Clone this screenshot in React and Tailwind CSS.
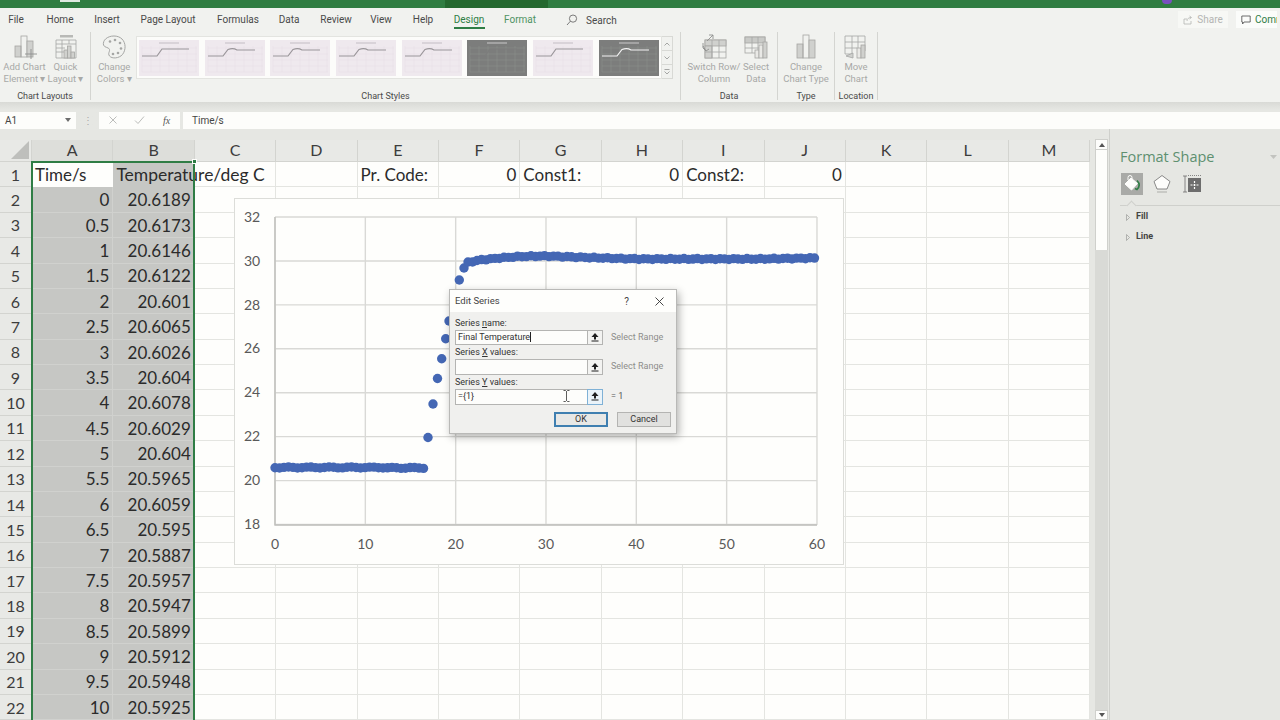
import React from 'react';

const tabs = [
  { label: 'File', cls: 'w-[32px]' },
  { label: 'Home', cls: 'w-[56px]' },
  { label: 'Insert', cls: 'w-[38px]' },
  { label: 'Page Layout', cls: 'w-[84px]' },
  { label: 'Formulas', cls: 'w-[56px]' },
  { label: 'Data', cls: 'w-[46px]' },
  { label: 'Review', cls: 'w-[48px]' },
  { label: 'View', cls: 'w-[42px]' },
  { label: 'Help', cls: 'w-[42px]' },
];

const columns = ['A', 'B', 'C', 'D', 'E', 'F', 'G', 'H', 'I', 'J', 'K', 'L', 'M'];

const rows = [
  ['0', '20.6189'], ['0.5', '20.6173'], ['1', '20.6146'], ['1.5', '20.6122'], ['2', '20.601'],
  ['2.5', '20.6065'], ['3', '20.6026'], ['3.5', '20.604'], ['4', '20.6078'], ['4.5', '20.6029'],
  ['5', '20.604'], ['5.5', '20.5965'], ['6', '20.6059'], ['6.5', '20.595'], ['7', '20.5887'],
  ['7.5', '20.5957'], ['8', '20.5947'], ['8.5', '20.5899'], ['9', '20.5912'], ['9.5', '20.5948'],
  ['10', '20.5925'],
];

// marker positions on the chart, in chart pixels
const riseDots = [
  [194, 239.5], [199, 206], [203.5, 180.5], [207.7, 160.7], [211.7, 140.7], [215, 123],
  [225.3, 82], [230, 70],
];
const plateau = [[236, 64], [246, 62], [266, 60], [286, 58.5], [312, 58], [366, 60], [406, 61], [466, 61], [526, 61], [583, 60]];

function plateauY(x) {
  for (let i = 0; i < plateau.length - 1; i++) {
    const [x0, y0] = plateau[i];
    const [x1, y1] = plateau[i + 1];
    if (x <= x1) return y0 + ((x - x0) / (x1 - x0)) * (y1 - y0);
  }
  return 60;
}

const dots = [];
for (let x = 41; x <= 192; x += 4.5) dots.push([x, 269.5 + Math.sin(x * 1.7) * 0.5 + (x > 150 ? 0.4 : 0)]);
riseDots.forEach((d) => dots.push(d));
for (let x = 234; x <= 584; x += 4.5) dots.push([x, plateauY(x) + Math.sin(x * 2.3) * 0.5]);

function Thumb({ dark, bright, bump }) {
  const bg = dark ? '#7c7d7c' : '#efe9ee';
  const grid = dark ? '#8f908f' : '#e6dee4';
  const line = bright ? '#f4f4f4' : dark ? '#7c7d7c' : '#9a969a';
  const curve = bump ? 'M3 16H18L23 9.5Q28 7.5 32 10H50' : 'M3 16H18L23 9H50';
  return (
    <svg width="60" height="36" viewBox="0 0 60 36" className="shrink-0">
      <rect width="60" height="36" fill={bg} />
      {[8, 14, 20, 26, 32].map((y) => <path key={y} d={`M3 ${y}H58`} stroke={grid} strokeWidth="0.5" />)}
      {[3, 12, 21, 30, 39, 48, 57].map((x) => <path key={x} d={`M${x} 6V32`} stroke={grid} strokeWidth="0.5" />)}
      <rect x="20" y="2.5" width="20" height="1" fill={dark ? '#c9c9c9' : '#c4bec3'} />
      <path d={curve} stroke={line} strokeWidth="1.2" fill="none" />
    </svg>
  );
}

function RibbonButton({ icon, lines, width }) {
  return (
    <div className={`${width} flex flex-col items-center shrink-0`}>
      <div className="h-[29px] flex items-center justify-center">{icon}</div>
      {lines.map((line) => (
        <div key={line} className="h-[12px] leading-[12px] text-[9.5px] text-[#a8a9a7] whitespace-nowrap">{line}</div>
      ))}
    </div>
  );
}

function Group({ label, width, children }) {
  return (
    <div className={`${width} h-[68px] flex flex-col border-r border-[#d4d5d1] shrink-0`}>
      <div className="flex-1 flex">{children}</div>
      <div className="text-center text-[9px] leading-[12px] text-[#4a4a4a] mb-[-2px]">{label}</div>
    </div>
  );
}

const s = { stroke: '#a5a6a4', strokeWidth: 0.8, fill: 'none' };
const f = { stroke: '#a5a6a4', strokeWidth: 0.8, fill: '#d0d1ce' };

const AddChartIcon = (
  <svg width="26" height="26" viewBox="0 0 26 26">
    <rect x="3" y="12" width="6" height="11" {...f} />
    <rect x="9" y="2" width="6" height="21" {...s} />
    <rect x="15" y="7" width="6" height="16" {...f} />
    <path d="M13 20H25M19 15V25" stroke="#8f908e" strokeWidth="0.9" />
  </svg>
);
const QuickLayoutIcon = (
  <svg width="24" height="26" viewBox="0 0 24 26">
    <rect x="6" y="1" width="13" height="2.5" fill="#b8b9b6" />
    <path d="M2 6H22V24H2ZM2 10H22M2 14H11M2 18H11M8 6V24M15 6V10" {...s} />
    <rect x="10" y="16" width="3.5" height="8" {...f} />
    <rect x="13.5" y="12" width="3.5" height="12" {...f} />
    <rect x="17" y="18" width="3.5" height="6" {...f} />
  </svg>
);
const PaletteIcon = (
  <svg width="26" height="26" viewBox="0 0 26 26">
    <path d="M13 2C6 2 1.5 6.5 2.5 11C3.5 14 8 13 8.5 15.5C9 18 6.5 19 8.5 22C11 25 18 24.5 21.5 20.5C25 16 25 9 21 5C19 3 16 2 13 2Z" {...s} strokeWidth="1" />
    <circle cx="9" cy="7.5" r="1.3" fill="#a5a6a4" />
    <circle cx="14" cy="6" r="1.3" fill="#a5a6a4" />
    <circle cx="19" cy="9" r="1.3" fill="#a5a6a4" />
    <circle cx="20" cy="14.5" r="1.3" fill="#a5a6a4" />
    <circle cx="17" cy="19" r="1.3" fill="#a5a6a4" />
    <circle cx="12" cy="20" r="1.3" fill="#a5a6a4" />
  </svg>
);
const SwitchIcon = (
  <svg width="26" height="26" viewBox="0 0 26 26">
    <rect x="4" y="6" width="21" height="18" {...s} />
    <rect x="4" y="6" width="21" height="6" fill="#d0d1ce" stroke="#a5a6a4" strokeWidth="0.8" />
    <rect x="4" y="12" width="7" height="12" fill="#d0d1ce" stroke="#a5a6a4" strokeWidth="0.8" />
    <path d="M11 6V24M18 6V24M4 18H25" {...s} />
    <path d="M2 9V14L5 17M2 12L5 17L8 15M6 7L12 1M8 1H12V5" stroke="#8f908e" strokeWidth="0.9" fill="none" />
  </svg>
);
const SelectDataIcon = (
  <svg width="26" height="26" viewBox="0 0 26 26">
    <rect x="2" y="3" width="20" height="16" {...s} />
    <rect x="2" y="3" width="20" height="6" fill="#c9cac7" stroke="#a5a6a4" strokeWidth="0.8" />
    <path d="M2 14H22M9 3V19M15 3V19" {...s} />
    <rect x="12" y="16" width="4" height="8" fill="#e9e9e6" stroke="#a5a6a4" strokeWidth="0.8" />
    <rect x="16" y="11" width="4" height="13" fill="#e9e9e6" stroke="#a5a6a4" strokeWidth="0.8" />
    <rect x="20" y="8" width="4" height="16" fill="#d0d1ce" stroke="#a5a6a4" strokeWidth="0.8" />
  </svg>
);
const ChartTypeIcon = (
  <svg width="24" height="26" viewBox="0 0 24 26">
    <rect x="3" y="10" width="6" height="14" {...f} />
    <rect x="9" y="1" width="6" height="23" {...s} />
    <rect x="15" y="6" width="6" height="18" {...f} />
  </svg>
);
const MoveChartIcon = (
  <svg width="26" height="26" viewBox="0 0 26 26">
    <path d="M2 2H22V17M2 2V20H10M2 8H22M2 14H14M9 2V20M15 2V14" {...s} />
    <path d="M3 22L10 19V24Z" {...f} />
    <rect x="14" y="14" width="4" height="10" fill="#e9e9e6" stroke="#a5a6a4" strokeWidth="0.8" />
    <rect x="18" y="11" width="4" height="13" {...f} />
  </svg>
);

function UpButton({ active }) {
  return (
    <div className={`w-[16px] h-full shrink-0 flex items-center justify-center border ${active ? 'border-[#7fb1d6] bg-[#eaf3f9]' : 'border-[#b4b4b2] bg-[#f3f3f1]'}`}>
      <svg width="8" height="9" viewBox="0 0 8 9">
        <path d="M4 0L7.5 4H5V6.5H3V4H0.5Z" fill="#1f1f1f" />
        <path d="M0.5 8H7.5" stroke="#1f1f1f" strokeWidth="1" />
      </svg>
    </div>
  );
}

function SeriesField({ label, value, hint, caret, dim = true }) {
  return (
    <div>
      <div className="h-[14px] leading-[14px] text-[#333] whitespace-nowrap">{label}</div>
      <div className="flex items-center h-[15.75px]">
        <div className="w-[132px] h-full bg-[#fdfdfb] border border-[#b4b4b2] border-r-0 px-[2px] leading-[13px] text-[#333] flex items-center">
          {value}
          {caret && <span className="inline-block w-px h-[10px] bg-[#222]" />}
        </div>
        <UpButton active={!dim} />
        <div className={`ml-[8px] whitespace-nowrap ${dim ? 'text-[#8d8d8b]' : 'text-[#555]'}`}>{hint}</div>
      </div>
    </div>
  );
}

export default function App() {
  return (
    <div className="w-[1280px] h-[720px] overflow-hidden flex flex-col bg-[#e6e7e3] font-['Roboto',sans-serif]">
      {/* title bar, only the bottom edge is on screen */}
      <div className="h-[8px] bg-[#307d42] flex shrink-0">
        <div className="ml-[60px] w-[20px] h-[2px] bg-[#dfe9e1]" />
        <div className="ml-[365px] w-[103px] bg-[#24682f]" />
        <div className="ml-[614px] w-[10px] h-[4px] rounded-b-full bg-[#7a4fc0]" />
      </div>

      {/* tabs */}
      <div className="h-[24px] bg-[#f1f2ef] flex items-start shrink-0 text-[10px] text-[#4a4a4a]">
        {tabs.map((t) => (
          <div key={t.label} className={`${t.cls} text-center leading-[24px]`}>{t.label}</div>
        ))}
        <div className="w-[50px] text-center leading-[24px] text-[#2f7d45] relative">
          Design
          <div className="absolute left-[10px] right-[9px] top-[19px] h-[2px] bg-[#2f7d45]" />
        </div>
        <div className="w-[52px] text-center leading-[24px] text-[#4f9363]">Format</div>
        <div className="ml-[20px] h-[24px] flex items-center gap-[8px]">
          <svg width="12" height="12" viewBox="0 0 12 12">
            <circle cx="7" cy="4.6" r="3.6" fill="none" stroke="#6d6d6d" strokeWidth="0.9" />
            <path d="M4.4 7.2L1 11" stroke="#6d6d6d" strokeWidth="0.9" />
          </svg>
          <span className="w-[30px]">Search</span>
        </div>
        <div className="ml-[562px] mt-[3px] w-[50px] h-[17px] bg-[#f7f8f5] flex items-center justify-center gap-[4px] text-[#b4b5b3] shrink-0">
          <svg width="10" height="10" viewBox="0 0 10 10">
            <path d="M1 4H4M1 4V9H8V6M4 6C4 3.5 6 2.5 8 2.5M6.5 1L8.5 2.5L6.5 4" fill="none" stroke="#b4b5b3" strokeWidth="0.8" />
          </svg>
          Share
        </div>
        <div className="ml-[8px] mt-[3px] w-[41px] h-[17px] bg-[#fbfcfa] flex items-center pl-[5px] gap-[4px] text-[#2f7d45] overflow-hidden shrink-0 whitespace-nowrap">
          <svg width="10" height="10" viewBox="0 0 10 10" className="shrink-0">
            <path d="M0.8 1H9.2V7H3L1.6 9V7H0.8Z" fill="none" stroke="#4a4a4a" strokeWidth="0.8" />
          </svg>
          Comments
        </div>
      </div>

      {/* ribbon */}
      <div className="h-[70px] bg-[#f1f2ef] flex shrink-0">
        <Group label="Chart Layouts" width="w-[91px]">
          <div className="flex pl-[4px]">
            <RibbonButton icon={AddChartIcon} lines={['Add Chart', 'Element ▾']} width="w-[41px]" />
            <RibbonButton icon={QuickLayoutIcon} lines={['Quick', 'Layout ▾']} width="w-[41px]" />
          </div>
        </Group>
        <Group label="Chart Styles" width="w-[590px]">
          <div className="flex">
            <div className="ml-[2px]">
              <RibbonButton icon={PaletteIcon} lines={['Change', 'Colors ▾']} width="w-[42.5px]" />
            </div>
            <div className="h-[43px] mt-[4px] bg-[#fcfcfa] border border-[#e3e4e0] w-[526px] flex items-center gap-[5.7px] pl-[2.5px] overflow-hidden shrink-0">
              <Thumb /><Thumb bump /><Thumb bump /><Thumb bump /><Thumb bump /><Thumb dark /><Thumb /><Thumb dark bright bump />
            </div>
            <div className="w-[11px] h-[43px] mt-[4px] flex flex-col border border-l-0 border-[#d8d9d5] text-[#a5a6a4]">
              <div className="h-[14px] flex items-center justify-center border-b border-[#d8d9d5]">
                <svg width="6" height="4" viewBox="0 0 6 4"><path d="M0.5 3.5L3 1L5.5 3.5" fill="none" stroke="#a5a6a4" /></svg>
              </div>
              <div className="h-[14px] flex items-center justify-center border-b border-[#d8d9d5]">
                <svg width="6" height="4" viewBox="0 0 6 4"><path d="M0.5 0.5L3 3L5.5 0.5" fill="none" stroke="#a5a6a4" /></svg>
              </div>
              <div className="flex-1 flex items-center justify-center">
                <svg width="6" height="6" viewBox="0 0 6 6"><path d="M0.5 0.5H5.5M0.5 2.5L3 5L5.5 2.5" fill="none" stroke="#a5a6a4" /></svg>
              </div>
            </div>
          </div>
        </Group>
        <Group label="Data" width="w-[97px]">
          <div className="flex pl-[8px]">
            <RibbonButton icon={SwitchIcon} lines={['Switch Row/', 'Column']} width="w-[50px]" />
            <RibbonButton icon={SelectDataIcon} lines={['Select', 'Data']} width="w-[34px]" />
          </div>
        </Group>
        <Group label="Type" width="w-[57px]">
          <RibbonButton icon={ChartTypeIcon} lines={['Change', 'Chart Type']} width="w-full" />
        </Group>
        <Group label="Location" width="w-[43px]">
          <RibbonButton icon={MoveChartIcon} lines={['Move', 'Chart']} width="w-full" />
        </Group>
      </div>

      {/* formula bar */}
      <div className="h-[27px] shrink-0 bg-gradient-to-b from-[#d9dad6] to-[#e6e7e3] to-[30%] flex items-end text-[10px] text-[#444]">
        <div className="w-[76px] h-[17.5px] bg-[#fdfdfb] flex items-center justify-between px-[5px]">
          <span>A1</span>
          <svg width="6" height="4" viewBox="0 0 6 4"><path d="M0 0H6L3 4Z" fill="#6d6d6d" /></svg>
        </div>
        <div className="w-[23px] h-[17.5px] flex items-center justify-center text-[#a9aaa8]">⋮</div>
        <div className="w-[81px] h-[17.5px] bg-[#fdfdfb] flex items-center">
          <svg width="10" height="10" viewBox="0 0 10 10" className="ml-[9px]"><path d="M1.5 1.5L8.5 8.5M8.5 1.5L1.5 8.5" stroke="#bcbdbb" strokeWidth="1" /></svg>
          <svg width="11" height="10" viewBox="0 0 11 10" className="ml-[16px]"><path d="M1 5.5L4 8.5L10 1.5" fill="none" stroke="#bcbdbb" strokeWidth="1" /></svg>
          <span className="ml-[18px] italic font-['Liberation_Serif',serif] text-[#555]">fx</span>
        </div>
        <div className="ml-[3px] flex-1 h-[17.5px] bg-[#fdfdfb] flex items-center pl-[9px]">Time/s</div>
      </div>

      {/* sheet and task pane */}
      <div className="flex-1 flex min-h-0">
        <div className="w-[1095px] pt-[11px] shrink-0">
          <div className="relative h-[580px] overflow-hidden font-['Lato',sans-serif] text-[17px] text-[#2b2b2b]">
            <div className="grid grid-cols-[32px_repeat(13,81.4px)] grid-rows-[22px] auto-rows-[25.38px]">
              {/* header row */}
              <div className="bg-[#e8e9e6] border-r border-b border-[#d3d4d0] relative">
                <div className="absolute right-[2px] bottom-[2px] w-0 h-0 border-l-[18px] border-l-transparent border-b-[18px] border-b-[#bebfbc]" />
              </div>
              {columns.map((c, i) => (
                <div
                  key={c}
                  className={`flex items-center justify-center pb-[2px] text-[16px] text-[#3d3d3d] border-r border-[#d3d4d0] ${i < 2 ? 'bg-[#dddeda]' : 'bg-[#e8e9e6] border-b'}`}
                >
                  {c}
                </div>
              ))}

              {/* row 1 */}
              <RowHead n={1} />
              <div className="bg-[#fefefc] pl-[3px] pt-[1px] flex items-center whitespace-nowrap">Time/s</div>
              <div className="relative z-10 bg-[#c6c7c4] pl-[3px] pt-[1px] text-[17.5px] flex items-center whitespace-nowrap">Temperature/deg C</div>
              <Cell />
              <Cell />
              <Cell cls="pl-[3px]">Pr. Code:</Cell>
              <Cell cls="justify-end pr-[3px]">0</Cell>
              <Cell cls="pl-[3px]">Const1:</Cell>
              <Cell cls="justify-end pr-[3px]">0</Cell>
              <Cell cls="pl-[3px]">Const2:</Cell>
              <Cell cls="justify-end pr-[3px]">0</Cell>
              <Cell />
              <Cell />
              <Cell />

              {rows.map(([t, temp], r) => (
                <React.Fragment key={r}>
                  <RowHead n={r + 2} />
                  <div className="bg-[#c6c7c4] border-r border-b border-[#d0d1ce] pt-[1px] flex items-center justify-end pr-[3px]">{t}</div>
                  <div className="bg-[#c6c7c4] border-b border-[#d0d1ce] pt-[1px] flex items-center justify-end pr-[4px]">{temp}</div>
                  {columns.slice(2).map((c) => <Cell key={c} />)}
                </React.Fragment>
              ))}
            </div>

            {/* selection outline */}
            <div className="absolute z-20 left-[31px] top-[21px] w-[164px] h-[570px] border-2 border-[#2f7d45]" />
            <div className="absolute z-20 left-[192px] top-[19px] w-[5px] h-[5px] bg-[#2f7d45] border border-[#fefefc]" />

            {/* chart */}
            <div className="absolute z-20 left-[234px] top-[58px] w-[610px] h-[367px] bg-[#fefefc] border border-[#dcddd9]">
              <svg width="608" height="365" viewBox="0 0 608 365" className="block">
                {[0, 1, 2, 3, 4, 5, 6, 7].map((i) => (
                  <path key={i} d={`M40 ${18 + i * 43.93}H582`} stroke="#d9d9d6" strokeWidth="1.4" />
                ))}
                {[0, 1, 2, 3, 4, 5, 6].map((i) => (
                  <path key={i} d={`M${40 + i * 90.33} 18V326`} stroke="#d9d9d6" strokeWidth="1.4" />
                ))}
                <path d="M40 18V326H582" fill="none" stroke="#bfbfbc" strokeWidth="1.4" />
                {[32, 30, 28, 26, 24, 22, 20, 18].map((v, i) => (
                  <text key={v} x="17" y={22.7 + i * 43.93} fontSize="14" fill="#595959" textAnchor="middle" fontFamily="Lato, sans-serif">{v}</text>
                ))}
                {[0, 10, 20, 30, 40, 50, 60].map((v, i) => (
                  <text key={v} x={40 + i * 90.33} y="350" fontSize="14" fill="#595959" textAnchor="middle" fontFamily="Lato, sans-serif">{v}</text>
                ))}
                {dots.map(([x, y], i) => <circle key={i} cx={x - 1} cy={y - 1} r="4.7" fill="#4467b4" />)}
              </svg>
            </div>

            {/* Edit Series dialog */}
            <div className="absolute z-30 left-[449px] top-[149px] w-[228px] h-[145px] bg-[#f0f0ee] border border-[#b9b9b7] shadow-[2px_3px_8px_rgba(0,0,0,0.3)] font-['Roboto',sans-serif] text-[9px] flex flex-col">
              <div className="h-[22px] bg-[#fefefc] flex items-center pl-[5px] text-[9.5px] text-[#444] shrink-0">
                <span className="flex-1">Edit Series</span>
                <span className="text-[10px] text-[#444] mr-[26px]">?</span>
                <svg width="9" height="9" viewBox="0 0 9 9" className="mr-[12px]"><path d="M0.5 0.5L8.5 8.5M8.5 0.5L0.5 8.5" stroke="#333" strokeWidth="0.9" /></svg>
              </div>
              <div className="pl-[5px] pt-[3.5px] flex flex-col">
                <SeriesField label={<>Series <u>n</u>ame:</>} value="Final Temperature" caret hint="Select Range" />
                <SeriesField label={<>Series <u>X</u> values:</>} value="" hint="Select Range" />
                <SeriesField label={<>Series <u>Y</u> values:</>} value="={1}" hint="= 1" dim={false} />
              </div>
              <div className="flex pl-[104px] gap-[9px] mt-[7.5px]">
                <div className="w-[54px] h-[15px] border-2 border-[#3f7fb0] bg-[#e8e8e6] flex items-center justify-center text-[#333]">OK</div>
                <div className="w-[54px] h-[15px] border border-[#b4b4b2] bg-[#e1e1df] flex items-center justify-center text-[#333]">Cancel</div>
              </div>
            </div>

            {/* mouse cursor */}
            <svg width="7" height="12" viewBox="0 0 7 12" className="absolute z-30 left-[562.5px] top-[250px]">
              <path d="M0.5 0.5H2.5L3.5 1.5L4.5 0.5H6.5M3.5 1.5V10.5M0.5 11.5H2.5L3.5 10.5L4.5 11.5H6.5" fill="none" stroke="#333" strokeWidth="0.8" />
            </svg>
          </div>
        </div>

        {/* vertical scrollbar */}
        <div className="w-[13px] pt-[10px] flex flex-col shrink-0 bg-[#e6e7e3]">
          <div className="h-[11px] bg-[#fdfdfb] border border-[#cfd0cc] flex items-center justify-center shrink-0">
            <svg width="6" height="4" viewBox="0 0 6 4"><path d="M0 4L3 0L6 4Z" fill="#555" /></svg>
          </div>
          <div className="h-[100px] bg-[#fdfdfb] border-x border-[#cfd0cc] shrink-0" />
          <div className="flex-1 bg-[#d9dad6]" />
          <div className="h-[10px] bg-[#fdfdfb] border border-[#cfd0cc] flex items-center justify-center shrink-0">
            <svg width="6" height="4" viewBox="0 0 6 4"><path d="M0 0L6 0L3 4Z" fill="#555" /></svg>
          </div>
        </div>

        {/* Format Shape pane */}
        <div className="flex-1 ml-[1px] border-l border-[#cfd0cc] pl-[10px] pt-[18px]">
          <div className="flex items-center justify-between pr-[3px]">
            <span className="text-[14.5px] leading-[20px] text-[#5e9070] font-['Open_Sans',sans-serif]">Format Shape</span>
            <svg width="7" height="4" viewBox="0 0 7 4"><path d="M0 0H7L3.5 4Z" fill="#c2c3bf" /></svg>
          </div>
          <div className="flex items-center h-[22px] mt-[6px] ml-[1px]">
            <div className="w-[22px] h-[22px] bg-[#a9aaa7] flex items-center justify-center">
              <svg width="18" height="18" viewBox="0 0 18 18">
                <path d="M8 3L14.5 8.5L8.5 15L2 9Z" fill="#fdfdfb" stroke="#fdfdfb" />
                <path d="M5 5V2.5A2 2 0 0 1 9 2.5V5" fill="none" stroke="#fdfdfb" />
                <path d="M14 5.5C16.5 8 17 11.5 14 14.5L12 13.5" fill="none" stroke="#2f7d45" strokeWidth="1.5" />
              </svg>
            </div>
            <svg width="20" height="20" viewBox="0 0 20 20" className="ml-[9px]">
              <path d="M10 1.5L18 7.5L15 15H5L2 7.5Z" fill="#fdfdfb" stroke="#6d6d6d" strokeWidth="0.8" />
              <path d="M5 18H15" stroke="#c9cac6" strokeWidth="2" />
            </svg>
            <svg width="20" height="20" viewBox="0 0 20 20" className="ml-[10px]">
              <path d="M1 2H5M3 2V18M1 18H5" fill="none" stroke="#6d6d6d" strokeWidth="0.8" />
              <path d="M6 1.5H19" stroke="#6d6d6d" strokeWidth="0.8" strokeDasharray="1 1" />
              <rect x="6" y="4" width="13" height="14" fill="#6d6d6d" />
              <path d="M12.5 7V15M8.5 11H16.5" stroke="#fdfdfb" strokeWidth="1.2" strokeDasharray="2 1" />
            </svg>
          </div>
          <div className="relative h-[11px] border-b border-[#cfd0cc]">
            <div className="absolute left-[8px] top-[7px] w-[7px] h-[7px] rotate-45 bg-[#e6e7e3] border-l border-t border-[#cfd0cc]" />
          </div>
          <div className="pt-[1px]">
            <PaneRow label="Fill" />
            <PaneRow label="Line" />
          </div>
        </div>
      </div>
    </div>
  );
}

function RowHead({ n }) {
  return (
    <div className="bg-[#e8e9e6] border-r border-b border-[#d3d4d0] pt-[1px] flex items-center justify-center text-[16px] text-[#3d3d3d]">{n}</div>
  );
}

function Cell({ cls = '', children }) {
  return (
    <div className={`bg-[#fefefc] border-r border-b border-[#e4e5e1] pt-[1px] flex items-center whitespace-nowrap ${cls}`}>{children}</div>
  );
}

function PaneRow({ label }) {
  return (
    <div className="h-[20px] flex items-center gap-[6px] pl-[6px] text-[9px] font-bold text-[#444]">
      <svg width="4" height="7" viewBox="0 0 4 7"><path d="M0.5 0.5L3.5 3.5L0.5 6.5Z" fill="none" stroke="#9a9b98" strokeWidth="0.7" /></svg>
      {label}
    </div>
  );
}
